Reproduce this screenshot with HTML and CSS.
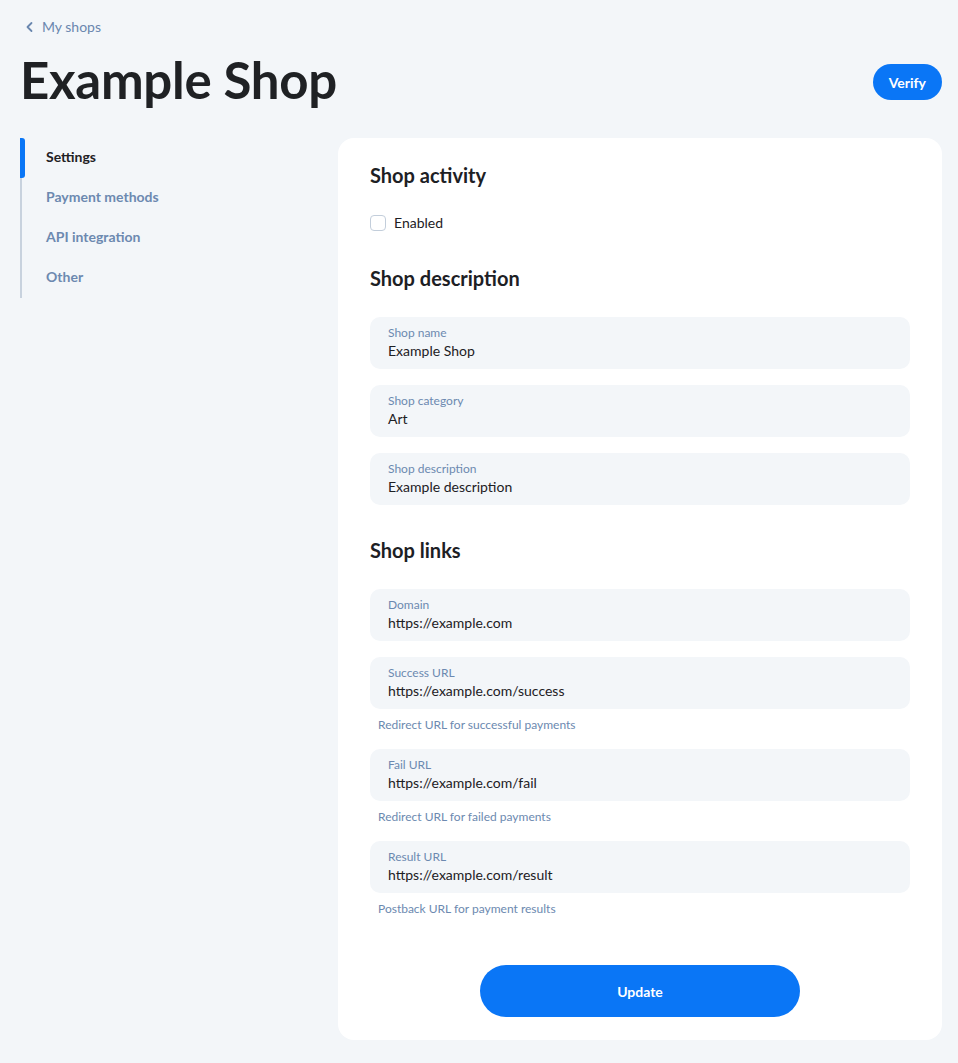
FILE: index.html
```html
<!DOCTYPE html>
<html lang="en">
<head>
<meta charset="utf-8">
<title>Example Shop</title>
<link rel="stylesheet" href="styles.css">
</head>
<body>
<div class="page">
  <a class="back" href="#">
    <svg class="back-icon" width="12" height="12" viewBox="0 0 12 12"><path d="M7.5 2 L3.5 6 L7.5 10" fill="none" stroke="currentColor" stroke-width="1.8" stroke-linecap="round" stroke-linejoin="round"/></svg>
    <span>My shops</span>
  </a>
  <div class="title-row">
    <h1 class="title">Example Shop</h1>
    <button class="btn-verify">Verify</button>
  </div>
  <div class="layout">
    <nav class="sidenav">
      <span class="sidenav-indicator"></span>
      <a class="sidenav-item active" href="#">Settings</a>
      <a class="sidenav-item" href="#">Payment methods</a>
      <a class="sidenav-item" href="#">API integration</a>
      <a class="sidenav-item" href="#">Other</a>
    </nav>
    <main class="card">
      <section class="section">
        <h2 class="section-title">Shop activity</h2>
        <label class="check">
          <span class="check-box"></span>
          <span class="check-label">Enabled</span>
        </label>
      </section>
      <section class="section">
        <h2 class="section-title">Shop description</h2>
        <div class="fields">
          <div class="group">
            <div class="field"><div class="field-label">Shop name</div><div class="field-value">Example Shop</div></div>
          </div>
          <div class="group">
            <div class="field"><div class="field-label">Shop category</div><div class="field-value">Art</div></div>
          </div>
          <div class="group">
            <div class="field"><div class="field-label">Shop description</div><div class="field-value">Example description</div></div>
          </div>
        </div>
      </section>
      <section class="section">
        <h2 class="section-title">Shop links</h2>
        <div class="fields">
          <div class="group">
            <div class="field"><div class="field-label">Domain</div><div class="field-value">https://example.com</div></div>
          </div>
          <div class="group">
            <div class="field"><div class="field-label">Success URL</div><div class="field-value">https://example.com/success</div></div>
            <div class="hint">Redirect URL for successful payments</div>
          </div>
          <div class="group">
            <div class="field"><div class="field-label">Fail URL</div><div class="field-value">https://example.com/fail</div></div>
            <div class="hint">Redirect URL for failed payments</div>
          </div>
          <div class="group">
            <div class="field"><div class="field-label">Result URL</div><div class="field-value">https://example.com/result</div></div>
            <div class="hint">Postback URL for payment results</div>
          </div>
        </div>
      </section>
      <div class="actions">
        <button class="btn-update">Update</button>
      </div>
    </main>
  </div>
</div>
</body>
</html>
```
FILE: styles.css
```css
* { box-sizing: border-box; }
html, body { margin: 0; padding: 0; }
body {
  background: #f3f6f9;
  font-family: "Lato", "Noto Sans", sans-serif;
  color: #1d2024;
}
.page {
  padding: 17px 16px 21px 20px;
}
.back {
  display: inline-flex;
  align-items: center;
  gap: 6px;
  margin-left: 4px;
  height: 20px;
  font-size: 14px;
  line-height: 20px;
  color: #6a87af;
  text-decoration: none;
}
.back-icon { display: block; }
.title-row {
  margin-top: 13px;
  display: flex;
  align-items: center;
  justify-content: space-between;
}
.title {
  margin: 0;
  font-size: 51px;
  line-height: 60px;
  font-weight: 700;
  color: #1f2124;
  letter-spacing: -0.3px;
}
.btn-verify {
  margin-top: 4px;
  height: 36px;
  padding: 0 16px;
  border: none;
  border-radius: 18px;
  background: #0a76f6;
  color: #fff;
  font-family: inherit;
  font-size: 14px;
  font-weight: 700;
}
.layout {
  margin-top: 28px;
  display: grid;
  grid-template-columns: 318px 1fr;
  align-items: start;
}
.sidenav {
  position: relative;
  display: flex;
  flex-direction: column;
  border-left: 2px solid #c8d2de;
}
.sidenav-indicator {
  position: absolute;
  left: -2px;
  top: 0;
  width: 5px;
  height: 40px;
  background: #0a76f6;
  border-radius: 0 3px 3px 0;
}
.sidenav-item {
  height: 40px;
  line-height: 38px;
  padding-left: 24px;
  font-size: 14px;
  font-weight: 700;
  color: #6c89b0;
  text-decoration: none;
}
.sidenav-item.active { color: #1f2124; }
.card {
  background: #fff;
  border-radius: 16px;
  padding: 24px 32px 23px;
}
.section + .section { margin-top: 32px; }
.section-title {
  margin: 0 0 26px;
  font-size: 20px;
  line-height: 26px;
  font-weight: 700;
  color: #1d2024;
}
.check {
  display: flex;
  align-items: center;
  gap: 8px;
  height: 20px;
  margin-top: -1px;
  margin-bottom: 1px;
}
.check-box {
  width: 16px;
  height: 16px;
  border: 1px solid #c3cedb;
  border-radius: 4px;
  background: #fff;
}
.check-label {
  font-size: 14px;
  line-height: 18px;
  color: #1d2024;
}
.fields {
  display: flex;
  flex-direction: column;
  gap: 16px;
}
.field {
  height: 52px;
  padding: 8px 18px;
  background: #f3f6f9;
  border-radius: 10px;
}
.field-label {
  font-size: 12px;
  line-height: 16px;
  color: #6c89b0;
}
.field-value {
  font-size: 14px;
  line-height: 19px;
  color: #1d2024;
}
.hint {
  margin-top: 8px;
  padding-left: 8px;
  font-size: 12px;
  line-height: 16px;
  color: #6c89b0;
}
.actions {
  margin-top: 48px;
  display: flex;
  justify-content: center;
}
.btn-update {
  width: 320px;
  height: 52px;
  border: none;
  border-radius: 26px;
  background: #0a76f6;
  color: #fff;
  font-family: inherit;
  font-size: 14px;
  font-weight: 700;
}
```
